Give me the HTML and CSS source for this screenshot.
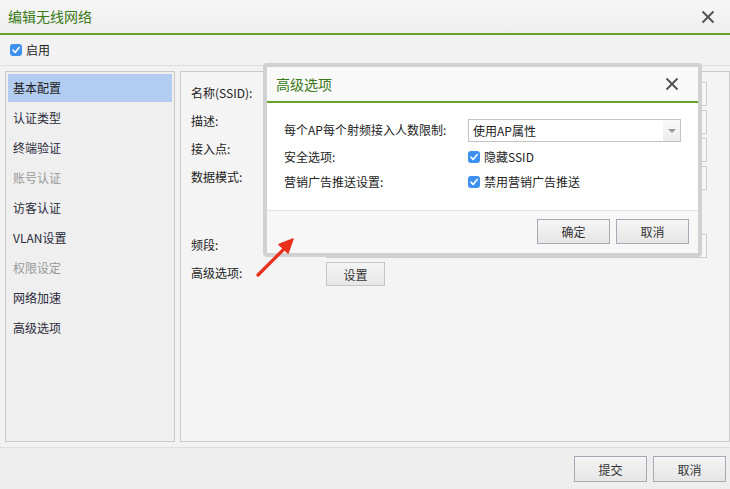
FILE: index.html
```html
<!DOCTYPE html>
<html lang="zh">
<head>
<meta charset="utf-8">
<link rel="stylesheet" href="styles.css">
</head>
<body>
<div class="win">
  <header class="hd">
    <span class="hd-title">编辑无线网络</span>
    <svg class="x-icon" width="14" height="14" viewBox="0 0 14 14"><path d="M1.5 1.5L12.5 12.5M12.5 1.5L1.5 12.5" stroke="#555" stroke-width="2"/></svg>
  </header>
  <div class="toolbar">
    <label class="chk">
      <svg class="cb" width="12" height="12" viewBox="0 0 12 12"><rect x="0" y="0" width="12" height="12" rx="3" fill="#3d8ff0"/><path d="M3 6.2L5.1 8.4L9.2 3.6" fill="none" stroke="#fff" stroke-width="1.6" stroke-linecap="round" stroke-linejoin="round"/></svg>
      <span>启用</span>
    </label>
  </div>
  <div class="main">
    <ul class="nav">
      <li class="nav-item active">基本配置</li>
      <li class="nav-item">认证类型</li>
      <li class="nav-item">终端验证</li>
      <li class="nav-item disabled">账号认证</li>
      <li class="nav-item">访客认证</li>
      <li class="nav-item">VLAN设置</li>
      <li class="nav-item disabled">权限设定</li>
      <li class="nav-item">网络加速</li>
      <li class="nav-item">高级选项</li>
    </ul>
    <div class="form">
      <div class="row"><span class="lbl">名称(SSID):</span><span class="inp"></span></div>
      <div class="row"><span class="lbl">描述:</span><span class="inp"></span></div>
      <div class="row"><span class="lbl">接入点:</span><span class="inp sel"><i class="caret"></i></span></div>
      <div class="row"><span class="lbl">数据模式:</span><span class="inp sel"><i class="caret"></i></span></div>
      <div class="spacer"></div>
      <div class="row"><span class="lbl">频段:</span><span class="inp sel"><i class="caret"></i></span></div>
      <div class="row"><span class="lbl">高级选项:</span><button class="btn btn-set">设置</button></div>
    </div>
  </div>
  <div class="ft">
    <button class="btn btn-ft">提交</button>
    <button class="btn btn-ft">取消</button>
  </div>

  <div class="modal">
    <div class="m-hd">
      <span class="m-title">高级选项</span>
      <svg class="x-icon" width="14" height="14" viewBox="0 0 14 14"><path d="M1.5 1.5L12.5 12.5M12.5 1.5L1.5 12.5" stroke="#555" stroke-width="2"/></svg>
    </div>
    <div class="m-body">
      <div class="m-row m-row1">
        <span class="m-lbl">每个AP每个射频接入人数限制:</span>
        <span class="m-sel"><span class="m-sel-txt">使用AP属性</span><span class="m-sel-btn"><i class="m-caret"></i></span></span>
      </div>
      <div class="m-row">
        <span class="m-lbl">安全选项:</span>
        <label class="chk">
          <svg class="cb" width="12" height="12" viewBox="0 0 12 12"><rect x="0" y="0" width="12" height="12" rx="3" fill="#3d8ff0"/><path d="M3 6.2L5.1 8.4L9.2 3.6" fill="none" stroke="#fff" stroke-width="1.6" stroke-linecap="round" stroke-linejoin="round"/></svg>
          <span>隐藏SSID</span>
        </label>
      </div>
      <div class="m-row">
        <span class="m-lbl">营销广告推送设置:</span>
        <label class="chk">
          <svg class="cb" width="12" height="12" viewBox="0 0 12 12"><rect x="0" y="0" width="12" height="12" rx="3" fill="#3d8ff0"/><path d="M3 6.2L5.1 8.4L9.2 3.6" fill="none" stroke="#fff" stroke-width="1.6" stroke-linecap="round" stroke-linejoin="round"/></svg>
          <span>禁用营销广告推送</span>
        </label>
      </div>
    </div>
    <div class="m-ft">
      <button class="btn btn-m">确定</button>
      <button class="btn btn-m">取消</button>
    </div>
  </div>

  <svg class="arrow" width="50" height="50" viewBox="0 0 50 50">
    <path d="M8 43L37 14" stroke="#e8301c" stroke-width="3.2" stroke-linecap="round"/>
    <polygon points="43,7 29,12.5 38,21" fill="#e8301c" stroke="#e8301c" stroke-width="1.5" stroke-linejoin="round"/>
  </svg>
</div>
</body>
</html>
```

FILE: styles.css
```css
* { box-sizing: border-box; margin: 0; padding: 0; }
html, body { width: 730px; height: 489px; overflow: hidden; }
body {
  font-family: "Noto Sans CJK SC", "Liberation Sans", sans-serif;
  font-size: 12px;
  color: #333;
  background: #f2f2f2;
}
.win {
  position: relative;
  width: 730px;
  height: 489px;
  display: flex;
  flex-direction: column;
}
.hd {
  height: 35px;
  flex: none;
  display: flex;
  align-items: center;
  justify-content: space-between;
  padding: 0 15px 0 8px;
  background: linear-gradient(#f6f6f6, #eeeeee);
  border-bottom: 2px solid #68a22a;
}
.hd-title {
  font-size: 14px;
  color: #3a7a16;
  line-height: 33px;
}
.x-icon { display: block; }
.toolbar {
  height: 31px;
  flex: none;
  display: flex;
  align-items: center;
  padding-left: 10px;
  border-bottom: 1px solid #dddddd;
  background: #f2f2f2;
}
.chk {
  display: flex;
  align-items: center;
  gap: 4px;
  line-height: 16px;
  color: #222;
}
.cb { display: block; flex: none; }
.main {
  flex: none;
  height: 381px;
  display: flex;
  gap: 5px;
  padding: 5px 0 5px 5px;
}
.nav {
  list-style: none;
  width: 170px;
  border: 1px solid #c9c9c9;
  background: #efefef;
  padding: 2px;
}
.nav-item {
  height: 28px;
  margin-bottom: 2px;
  padding-left: 5px;
  line-height: 27px;
  color: #2a2a3a;
}
.nav-item.active { background: #b3cdf0; color: #222; }
.nav-item.disabled { color: #999; }
.form {
  flex: 1;
  border: 1px solid #c9c9c9;
  background: #f4f4f4;
  padding: 10px 0 0 10px;
  display: flex;
  flex-direction: column;
  gap: 4px;
}
.row {
  height: 24px;
  display: flex;
  align-items: center;
}
.lbl {
  width: 135px;
  color: #222;
  padding-bottom: 3px;
}
.inp {
  position: relative;
  width: 381px;
  height: 24px;
  border: 1px solid #cccccc;
  background: #f7f7f7;
}
.sel .caret {
  position: absolute;
  right: 7px;
  top: 10px;
  border-left: 3px solid transparent;
  border-right: 3px solid transparent;
  border-top: 3px solid #888;
}
.spacer { height: 36px; }
.btn {
  font-family: "Noto Sans CJK SC", "Liberation Sans", sans-serif;
  font-size: 12px;
  color: #333;
  background: linear-gradient(#f5f5f5, #e6e6e6);
  border: 1px solid #a9a9b5;
  cursor: pointer;
}
.btn-set {
  width: 59px;
  height: 24px;
  border-color: #c6c6c6;
}
.ft {
  flex: 1;
  border-top: 1px solid #dddddd;
  background: #eeeeee;
  display: flex;
  justify-content: flex-end;
  align-items: flex-start;
  gap: 6px;
  padding: 8px 4px 0 0;
}
.btn-ft { width: 73px; height: 26px; }

.modal {
  position: absolute;
  left: 263px;
  top: 63px;
  width: 439px;
  height: 194px;
  border: 4px solid rgba(0, 0, 0, 0.18);
  border-radius: 4px;
  background-clip: padding-box;
  background: #ffffff;
  display: flex;
  flex-direction: column;
}
.m-hd {
  height: 36px;
  flex: none;
  display: flex;
  align-items: center;
  justify-content: space-between;
  padding: 0 19px 0 9px;
  background: #f9f9f9;
  border-bottom: 2px solid #68a22a;
}
.m-title { font-size: 14px; color: #3a7a16; }
.m-body {
  height: 108px;
  flex: none;
  padding: 16px 17px 0 17px;
  background: #ffffff;
  border-bottom: 1px solid #e3e3e3;
  display: flex;
  flex-direction: column;
  gap: 5px;
}
.m-row {
  height: 20px;
  display: flex;
  align-items: center;
}
.m-row1 { height: 23px; }
.m-lbl { width: 184px; color: #222; padding-bottom: 2px; }
.m-sel {
  width: 213px;
  height: 23px;
  border: 1px solid #c4c4c4;
  display: flex;
  align-items: center;
  background: #fff;
}
.m-sel-txt { flex: 1; padding-left: 4px; color: #222; }
.m-sel-btn {
  position: relative;
  width: 17px;
  height: 100%;
  background: linear-gradient(#fafafa, #ececec);
}
.m-caret {
  position: absolute;
  left: 5px;
  top: 9px;
  border-left: 4px solid transparent;
  border-right: 4px solid transparent;
  border-top: 4px solid #999;
}
.m-ft {
  flex: 1;
  background: #f7f7f7;
  display: flex;
  justify-content: flex-end;
  align-items: flex-start;
  gap: 6px;
  padding: 8px 9px 0 0;
}
.btn-m { width: 73px; height: 25px; }
.arrow {
  position: absolute;
  left: 250px;
  top: 232px;
}
```
